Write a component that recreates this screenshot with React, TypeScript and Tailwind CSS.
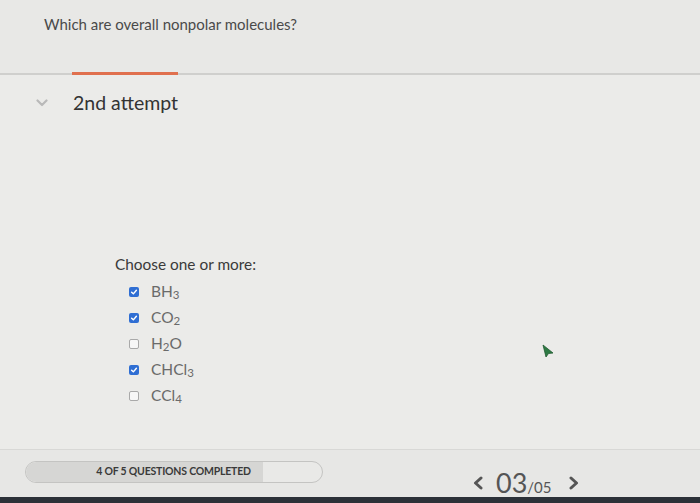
import React from "react";

function Box({ checked }: { checked: boolean }) {
  if (checked) {
    return (
      <span className="flex h-[10px] w-[10px] items-center justify-center rounded-[2px] bg-[#2f6ed3]">
        <svg width="8" height="8" viewBox="0 0 10 10">
          <path d="M2 5.2 L4.2 7.3 L8 2.8" fill="none" stroke="#fff" strokeWidth="1.8" strokeLinecap="round" strokeLinejoin="round" />
        </svg>
      </span>
    );
  }
  return <span className="block h-[10px] w-[10px] rounded-[2px] border border-[#a9a9a9] bg-[#f7f7f7]" />;
}

const options: { base: string; sub: string; tail?: string; checked: boolean }[] = [
  { base: "BH", sub: "3", checked: true },
  { base: "CO", sub: "2", checked: true },
  { base: "H", sub: "2", tail: "O", checked: false },
  { base: "CHCl", sub: "3", checked: true },
  { base: "CCl", sub: "4", checked: false },
];

export default function App() {
  return (
    <div
      className="relative flex h-[503px] w-[700px] flex-col overflow-hidden bg-[#e8e8e6] text-[#444]"
      style={{ fontFamily: "Lato, 'Open Sans', sans-serif" }}
    >
      {/* question */}
      <div className="h-[73px] pl-[44px] pt-[13px] text-[15px] leading-[22px] text-[#4a4a4a]">
        Which are overall nonpolar molecules?
      </div>

      {/* divider with orange tab */}
      <div className="h-[2px] bg-[#cfcfcd]">
        <div className="ml-[72px] mt-[-1px] h-[4px] w-[106px] bg-[#e0704e]" />
      </div>

      {/* attempt header */}
      <div className="flex h-[54px] items-center pt-[1px] bg-[#ebebe9]">
        <div className="flex w-[73px] justify-end pr-[25px]">
          <svg width="12" height="8" viewBox="0 0 12 8">
            <path d="M1.5 1.5 L6 6 L10.5 1.5" fill="none" stroke="#b9b9b9" strokeWidth="2.2" strokeLinecap="round" strokeLinejoin="round" />
          </svg>
        </div>
        <span className="text-[19.5px] leading-[26px] text-[#333]">2nd attempt</span>
      </div>

      {/* options */}
      <div className="flex flex-1 flex-col bg-[#ebebe9] pl-[115px] pt-[124px]">
        <div className="text-[15.4px] leading-[22px] text-[#3a3a3a]">Choose one or more:</div>
        <div className="mt-[4px] flex flex-col">
          {options.map((o, i) => (
            <div key={i} className="flex h-[26px] items-center">
              <div className="flex w-[36px] justify-center pl-[2px]">
                <Box checked={o.checked} />
              </div>
              <span className="text-[15.5px] leading-[20px] text-[#6a6a6a]">
                {o.base}
                <span className="relative top-[2px] text-[11.5px]">{o.sub}</span>
                {o.tail}
              </span>
            </div>
          ))}
        </div>
      </div>

      {/* footer */}
      <div className="flex h-[48px] items-start border-t border-[#d8d8d6] bg-[#e7e7e5]">
        <div className="ml-[25px] mt-[11px] flex h-[22px] w-[298px] overflow-hidden rounded-full border border-[#c4c4c2] bg-[#e9e9e7]">
          <div className="flex w-[237px] items-center justify-center rounded-l-full bg-[#d6d6d4] pl-[62px] pr-[4px] text-[10.5px] font-bold tracking-[-0.2px] text-[#3a3a3a]">
            4 OF 5 QUESTIONS COMPLETED
          </div>
        </div>
        <div className="ml-[149px] mt-[19px] flex items-center">
          <svg width="12" height="14" viewBox="0 0 12 14">
            <path d="M9 2 L3.5 7 L9 12" fill="none" stroke="#555" strokeWidth="3" strokeLinecap="round" strokeLinejoin="round" />
          </svg>
          <span className="ml-[12px] text-[27px] leading-[28px] text-[#555]">03</span>
          <span className="relative top-[4px] text-[15px] leading-[20px] text-[#555]">/05</span>
          <span className="ml-[16px]">
            <svg width="12" height="14" viewBox="0 0 12 14">
              <path d="M3 2 L8.5 7 L3 12" fill="none" stroke="#555" strokeWidth="3" strokeLinecap="round" strokeLinejoin="round" />
            </svg>
          </span>
        </div>
      </div>
      <div className="h-[6px] bg-[#2c3138]" />

      {/* mouse cursor */}
      <svg className="absolute left-[542px] top-[344px]" width="12" height="14" viewBox="0 0 12 14">
        <path d="M1 1 L11 9 L6.5 9.5 L4 13 Z" fill="#2d7a44" stroke="#1f5a30" strokeWidth="0.8" />
      </svg>
    </div>
  );
}
